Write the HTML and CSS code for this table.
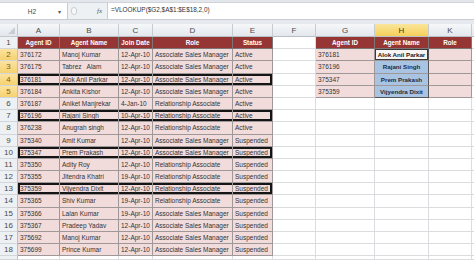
FILE: index.html
```html
<!DOCTYPE html>
<html>
<head>
<meta charset="utf-8">
<link rel="stylesheet" href="styles.css">
</head>
<body>
<div class="app">
  <div class="topstrip"></div>
  <div class="fbar">
    <div class="namebox"><span class="nm">H2</span><span class="dd">▾</span></div>
    <div class="fctl"><span class="grip"></span><span class="fx">fx</span></div>
    <div class="formula">=VLOOKUP($G2,$A$1:$E$18,2,0)</div>
  </div>
  <div class="gap"></div>
  <div class="sheet">
    <div class="corner"><span class="tri"></span></div><div class="ch">A</div><div class="ch">B</div><div class="ch">C</div><div class="ch">D</div><div class="ch">E</div><div class="ch">F</div><div class="ch">G</div><div class="ch sel">H</div><div class="ch">K</div><div class="ch"></div>

    <div class="rh">1</div><div class="th">Agent ID</div><div class="th">Agent Name</div><div class="th">Join Date</div><div class="th">Role</div><div class="th">Status</div><div class="c"></div><div class="th">Agent ID</div><div class="th">Agent Name</div><div class="th">Role</div><div class="c"></div>

    <div class="rh sel">2</div><div class="td">376172</div><div class="td">Manoj Kumar</div><div class="td">12-Apr-10</div><div class="td">Associate Sales Manager</div><div class="td">Active</div><div class="c"></div><div class="td">376181</div><div class="td hcell active">Alok Anil Parkar</div><div class="td"></div><div class="c"></div>

    <div class="rh sel">3</div><div class="td">376175</div><div class="td">Tabrez   Alam</div><div class="td">12-Apr-10</div><div class="td">Associate Sales Manager</div><div class="td">Active</div><div class="c"></div><div class="td">376196</div><div class="td hcell blue">Rajani Singh</div><div class="td"></div><div class="c"></div>

    <div class="rh sel">4</div><div class="td hl first">376181</div><div class="td hl">Alok Anil Parkar</div><div class="td hl">12-Apr-10</div><div class="td hl">Associate Sales Manager</div><div class="td hl last">Active</div><div class="c"></div><div class="td">375347</div><div class="td hcell blue">Prem Prakash</div><div class="td"></div><div class="c"></div>

    <div class="rh sel">5</div><div class="td">376184</div><div class="td">Ankita Kishor</div><div class="td">12-Apr-10</div><div class="td">Associate Sales Manager</div><div class="td">Active</div><div class="c"></div><div class="td">375359</div><div class="td hcell blue bottom">Vijyendra Dixit</div><div class="td"></div><div class="c"></div>

    <div class="rh">6</div><div class="td">376187</div><div class="td">Aniket Manjrekar</div><div class="td">4-Jan-10</div><div class="td">Relationship Associate</div><div class="td">Active</div><div class="c"></div><div class="c"></div><div class="c"></div><div class="c"></div><div class="c"></div>

    <div class="rh">7</div><div class="td hl first">376196</div><div class="td hl">Rajani Singh</div><div class="td hl">10-Apr-10</div><div class="td hl">Relationship Associate</div><div class="td hl last">Active</div><div class="c"></div><div class="c"></div><div class="c"></div><div class="c"></div><div class="c"></div>

    <div class="rh">8</div><div class="td">376238</div><div class="td">Anugrah singh</div><div class="td">12-Apr-10</div><div class="td">Relationship Associate</div><div class="td">Active</div><div class="c"></div><div class="c"></div><div class="c"></div><div class="c"></div><div class="c"></div>

    <div class="rh">9</div><div class="td">375340</div><div class="td">Amit Kumar</div><div class="td">12-Apr-10</div><div class="td">Associate Sales Manager</div><div class="td">Suspended</div><div class="c"></div><div class="c"></div><div class="c"></div><div class="c"></div><div class="c"></div>

    <div class="rh">10</div><div class="td hl first">375347</div><div class="td hl">Prem Prakash</div><div class="td hl">12-Apr-10</div><div class="td hl">Associate Sales Manager</div><div class="td hl last">Suspended</div><div class="c"></div><div class="c"></div><div class="c"></div><div class="c"></div><div class="c"></div>

    <div class="rh">11</div><div class="td">375350</div><div class="td">Adity Roy</div><div class="td">12-Apr-10</div><div class="td">Relationship Associate</div><div class="td">Suspended</div><div class="c"></div><div class="c"></div><div class="c"></div><div class="c"></div><div class="c"></div>

    <div class="rh">12</div><div class="td">375355</div><div class="td">Jitendra Khatri</div><div class="td">19-Apr-10</div><div class="td">Relationship Associate</div><div class="td">Suspended</div><div class="c"></div><div class="c"></div><div class="c"></div><div class="c"></div><div class="c"></div>

    <div class="rh">13</div><div class="td hl first">375359</div><div class="td hl">Vijyendra Dixit</div><div class="td hl">12-Apr-10</div><div class="td hl">Relationship Associate</div><div class="td hl last">Suspended</div><div class="c"></div><div class="c"></div><div class="c"></div><div class="c"></div><div class="c"></div>

    <div class="rh">14</div><div class="td">375365</div><div class="td">Shiv Kumar</div><div class="td">19-Apr-10</div><div class="td">Relationship Associate</div><div class="td">Suspended</div><div class="c"></div><div class="c"></div><div class="c"></div><div class="c"></div><div class="c"></div>

    <div class="rh">15</div><div class="td">375366</div><div class="td">Lalan Kumar</div><div class="td">19-Apr-10</div><div class="td">Associate Sales Manager</div><div class="td">Suspended</div><div class="c"></div><div class="c"></div><div class="c"></div><div class="c"></div><div class="c"></div>

    <div class="rh">16</div><div class="td">375367</div><div class="td">Pradeep Yadav</div><div class="td">12-Apr-10</div><div class="td">Associate Sales Manager</div><div class="td">Suspended</div><div class="c"></div><div class="c"></div><div class="c"></div><div class="c"></div><div class="c"></div>

    <div class="rh">17</div><div class="td">375692</div><div class="td">Manoj Kumar</div><div class="td">12-Apr-10</div><div class="td">Associate Sales Manager</div><div class="td">Suspended</div><div class="c"></div><div class="c"></div><div class="c"></div><div class="c"></div><div class="c"></div>

    <div class="rh">18</div><div class="td">375699</div><div class="td">Prince Kumar</div><div class="td">12-Apr-10</div><div class="td">Associate Sales Manager</div><div class="td">Suspended</div><div class="c"></div><div class="c"></div><div class="c"></div><div class="c"></div><div class="c"></div>

    <div class="rh"></div><div class="c"></div><div class="c"></div><div class="c"></div><div class="c"></div><div class="c"></div><div class="c"></div><div class="c"></div><div class="c"></div><div class="c"></div><div class="c"></div>
  </div>
</div>
</body>
</html>
```
FILE: styles.css
```css
* { box-sizing: border-box; }
html, body { margin: 0; padding: 0; }
body {
  width: 474px;
  height: 260px;
  overflow: hidden;
  background: #ffffff;
  font-family: "Liberation Sans", Arial, sans-serif;
  color: #2b2b2b;
}
.app {
  display: flex;
  flex-direction: column;
  height: 260px;
}
.topstrip {
  height: 3px;
  background: #e3e7ec;
  border-bottom: 1px solid #cfd4da;
}
.fbar {
  height: 17px;
  display: flex;
  background: #eef1f4;
  border-bottom: 1px solid #c7ccd2;
}
.namebox {
  width: 68px;
  background: #ffffff;
  border-right: 1px solid #c7ccd2;
  display: flex;
  align-items: center;
  font-size: 6.5px;
  color: #444;
}
.nm { flex: 1; text-align: center; padding-left: 6px; }
.dd { width: 9px; font-size: 6px; color: #555; }
.fctl {
  width: 39px;
  display: flex;
  align-items: center;
  padding-left: 3px;
  gap: 20px;
}
.grip {
  width: 6px;
  height: 8px;
  border-radius: 3px;
  border: 1px solid #c9ced4;
  background: #f7f8fa;
}
.fx {
  font-family: "Liberation Serif", serif;
  font-style: italic;
  font-size: 7px;
  color: #555;
}
.formula {
  flex: 1;
  background: #ffffff;
  border-left: 1px solid #c7ccd2;
  font-size: 6.4px;
  color: #333;
  padding: 3px 0 0 3px;
  white-space: nowrap;
}
.gap {
  height: 4px;
  background: #e6e9ed;
}
.sheet {
  flex: 1;
  display: grid;
  grid-template-columns: 18px 42px 59px 34px 80px 40px 43px 59px 54px 43px 1fr;
  grid-template-rows: 13px repeat(18, 12.2px) 1fr;
  overflow: hidden;
}
.sheet > div {
  border-right: 1px solid #dadcdf;
  border-bottom: 1px solid #dadcdf;
  font-size: 6.5px;
  line-height: 11.5px;
  white-space: pre;
  overflow: hidden;
  padding-left: 2px;
}
.sheet > .corner {
  background: linear-gradient(#f4f6f8, #e3e7ec);
  border-right: 1px solid #c3c8ce;
  border-bottom: 1px solid #c3c8ce;
  display: flex;
  align-items: flex-end;
  justify-content: flex-end;
  padding: 0 2px 2px 0;
}
.tri {
  width: 0;
  height: 0;
  border-left: 7px solid transparent;
  border-bottom: 7px solid #c9cdd2;
}
.sheet > .ch {
  background: linear-gradient(#f5f7f9, #e3e7ec);
  border-right: 1px solid #c7ccd2;
  border-bottom: 1px solid #b9bfc6;
  text-align: center;
  font-size: 8px;
  line-height: 13px;
  color: #4a4a4a;
  padding: 0;
}
.sheet > .ch.sel {
  background: linear-gradient(#fbe59b, #f5cf5a);
  color: #4a3a10;
}
.sheet > .rh {
  background: #eef1f4;
  border-right: 1px solid #b9bfc6;
  border-bottom: 1px solid #d2d6db;
  text-align: center;
  font-size: 8px;
  line-height: 12px;
  color: #4a4a4a;
  padding: 0;
}
.sheet > .rh.sel {
  background: linear-gradient(#fbe3a0, #f6d26f);
  color: #8a5a12;
}
.sheet > .th {
  background: #963634;
  color: #ffffff;
  font-weight: bold;
  font-size: 6.3px;
  text-align: center;
  border-right: 1px solid #7d7474;
  border-bottom: 1px solid #7d7474;
  padding: 0;
}
.sheet > .td {
  background: #f2dcdb;
  border-right: 1px solid #9e9898;
  border-bottom: 1px solid #9e9898;
  color: #333333;
}
.sheet > .td.hl { box-shadow: inset 0 2px 0 #151515, inset 0 -2px 0 #151515; }
.sheet > .td.hl.first { box-shadow: inset 0 2px 0 #151515, inset 0 -2px 0 #151515, inset 2px 0 0 #151515; }
.sheet > .td.hl.last { box-shadow: inset 0 2px 0 #151515, inset 0 -2px 0 #151515, inset -2px 0 0 #151515; }
.sheet > .hcell {
  text-align: center;
  font-weight: bold;
  font-size: 6.2px;
  color: #1f2a3a;
  border-right: 1px solid #555;
  padding: 0;
}
.sheet > .hcell.active {
  background: #f7f4f4;
  box-shadow: inset 0 0 0 1px #3a3a3a;
  color: #1a1a1a;
}
.sheet > .hcell.blue {
  background: #a9c4e2;
}
.sheet > .hcell.bottom {
  border-bottom: 1px solid #555;
}
```
